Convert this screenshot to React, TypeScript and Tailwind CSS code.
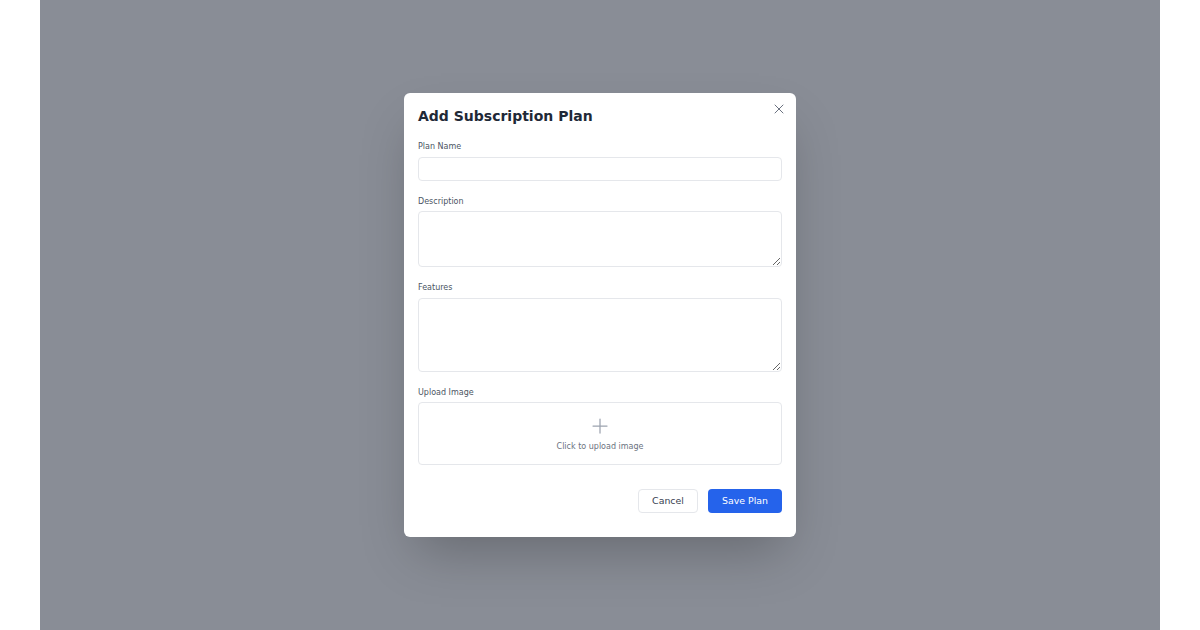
import { Plus, X } from "lucide-react"

function Field({ label, children }: { label: string; children: React.ReactNode }) {
  return (
    <div>
      <label className="block pt-[1px] text-[8px] leading-[12px] text-[#4b5563] mb-[3.5px]">{label}</label>
      {children}
    </div>
  )
}

export default function App() {
  return (
    <div className="h-[630px] w-[1200px] bg-white px-[40px] font-['DejaVu_Sans',sans-serif]">
      <div className="h-full bg-[#898d96] flex items-center justify-center">
        <div className="relative w-[392px] bg-white rounded-[6px] shadow-2xl px-[14px] pt-[13px] pb-[24px]">
          <button className="absolute top-[8px] right-[9px] text-[#6b7280]">
            <X size={16} strokeWidth={1.5} />
          </button>
          <h2 className="text-[14px] leading-[20px] font-bold text-[#1f2937]">Add Subscription Plan</h2>

          <div className="mt-[14px] flex flex-col gap-[14px]">
            <Field label="Plan Name">
              <input className="block w-full h-[24px] rounded-[4px] border border-[#e5e7eb] bg-white outline-none" />
            </Field>
            <Field label="Description">
              <textarea className="block w-full h-[56px] rounded-[4px] border border-[#e5e7eb] bg-white outline-none" />
            </Field>
            <Field label="Features">
              <textarea className="block w-full h-[74px] rounded-[4px] border border-[#e5e7eb] bg-white outline-none" />
            </Field>
            <Field label="Upload Image">
              <div className="h-[63px] rounded-[4px] border border-[#e5e7eb] flex flex-col items-center pt-[10.5px]">
                <Plus size={24} strokeWidth={1.25} className="text-[#9ca3af]" />
                <span className="mt-[3px] text-[8px] leading-[12px] text-[#6b7280]">Click to upload image</span>
              </div>
            </Field>
          </div>

          <div className="mt-[24px] flex justify-end gap-[10px]">
            <button className="h-[24px] w-[60px] rounded-[4px] border border-[#e5e7eb] bg-white text-[9.4px] text-[#374151]">
              Cancel
            </button>
            <button className="h-[24px] w-[74px] rounded-[4px] bg-[#2563eb] text-[9.4px] text-white">
              Save Plan
            </button>
          </div>
        </div>
      </div>
    </div>
  )
}
